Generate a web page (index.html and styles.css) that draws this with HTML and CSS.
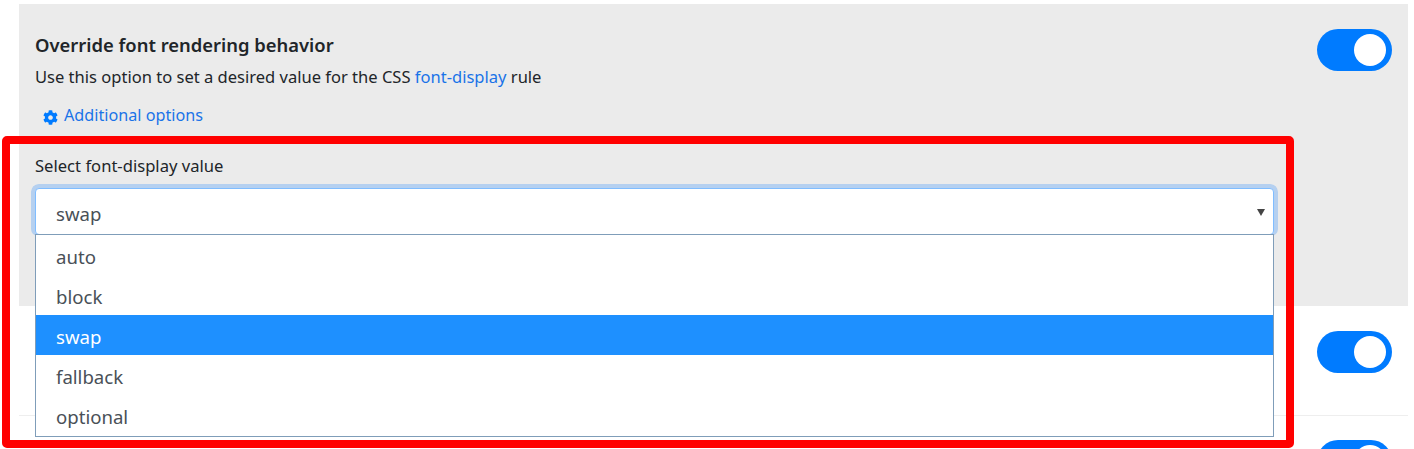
FILE: index.html
```html
<!DOCTYPE html>
<html lang="en">
<head>
<meta charset="utf-8">
<title>Font settings</title>
<link rel="stylesheet" href="styles.css">
</head>
<body>
<main class="page">
  <section class="panel">
    <div class="panel-body">
      <h3 class="title">Override font rendering behavior</h3>
      <p class="desc">Use this option to set a desired value for the CSS <a href="#" class="link">font-display</a> rule</p>
      <a href="#" class="options-link">
        <svg class="gear" viewBox="0 0 512 512" aria-hidden="true"><path d="M487.4 315.7l-42.6-24.6c4.3-23.2 4.3-47 0-70.2l42.6-24.6c4.9-2.8 7.1-8.6 5.5-14-11.1-35.6-30-67.8-54.7-94.6-3.8-4.1-10-5.1-14.8-2.3L380.8 110c-17.9-15.4-38.5-27.3-60.8-35.1V25.8c0-5.6-3.9-10.5-9.4-11.7-36.7-8.2-74.3-7.8-109.2 0-5.5 1.2-9.4 6.1-9.4 11.7V75c-22.2 7.9-42.8 19.8-60.8 35.1L88.7 85.5c-4.9-2.8-11-1.9-14.8 2.3-24.7 26.7-43.6 58.9-54.7 94.6-1.7 5.4.6 11.2 5.5 14L67.3 221c-4.3 23.2-4.3 47 0 70.2l-42.6 24.6c-4.9 2.8-7.1 8.6-5.5 14 11.1 35.6 30 67.8 54.7 94.6 3.8 4.1 10 5.1 14.8 2.3l42.6-24.6c17.9 15.4 38.5 27.3 60.8 35.1v49.2c0 5.6 3.9 10.5 9.4 11.7 36.7 8.2 74.3 7.8 109.2 0 5.5-1.2 9.4-6.1 9.4-11.7v-49.2c22.2-7.9 42.8-19.8 60.8-35.1l42.6 24.6c4.9 2.8 11 1.9 14.8-2.3 24.7-26.7 43.6-58.9 54.7-94.6 1.5-5.5-.7-11.3-5.6-14.1zM256 336c-44.1 0-80-35.9-80-80s35.9-80 80-80 80 35.9 80 80-35.9 80-80 80z"/></svg>
        <span>Additional options</span>
      </a>
      <label class="field-label">Select font-display value</label>
      <div class="select-wrap">
        <div class="select">
          <span>swap</span>
          <svg class="caret" viewBox="0 0 8 7" aria-hidden="true"><path d="M0 0h8L4 7z"/></svg>
        </div>
        <ul class="menu">
          <li class="option">auto</li>
          <li class="option">block</li>
          <li class="option option-active">swap</li>
          <li class="option">fallback</li>
          <li class="option">optional</li>
        </ul>
      </div>
    </div>
    <span class="switch"><span class="knob"></span></span>
  </section>
  <section class="row row-second">
    <span class="switch"><span class="knob"></span></span>
  </section>
  <section class="row row-third">
    <span class="switch"><span class="knob"></span></span>
  </section>
  <div class="highlight"></div>
</main>
</body>
</html>
```
FILE: styles.css
```css
* { box-sizing: border-box; }
html, body { margin: 0; height: 100%; background: #fff; overflow: hidden; }
body { font-family: "Noto Sans", "Open Sans", sans-serif; color: #212529; }
.page { position: relative; height: 449px; padding: 4px 6px 0 19px; overflow: hidden; }
.panel {
  display: flex; justify-content: space-between; align-items: flex-start;
  height: 302px; background: #ebebeb; padding: 25px 16px 0 16px;
}
.panel-body { width: 1239px; padding-top: 1px; }
.title { margin: 2px 0 0; font-size: 18.4px; line-height: 26px; font-weight: 600; }
.desc { margin: 7px 0 0; font-size: 16.55px; line-height: 24px; }
.link { color: #1a73e8; text-decoration: none; }
.options-link { display: flex; align-items: center; gap: 6px; margin: 14px 0 0 8px; color: #1a73e8; text-decoration: none; font-size: 16.2px; line-height: 24px; }
.gear { width: 15px; height: 15px; fill: #007bff; margin-top: 4px; }
.field-label { display: block; margin-top: 27px; font-size: 16.6px; line-height: 24px; }
.select-wrap { position: relative; margin-top: 10px; }
.select {
  display: flex; justify-content: space-between; align-items: center;
  height: 47px; padding: 4px 8px 0 20px; background: #fff;
  border: 1px solid #80bdff; border-radius: 4px;
  box-shadow: 0 0 0 4px #b5d0f0;
  clip-path: inset(-4px -4px -1px -4px round 7px);
  font-size: 18.6px; color: #495057;
}
.caret { width: 8px; height: 7px; fill: #444; margin-top: -3px; }
.menu {
  position: absolute; left: 0; right: 0; top: 46px; margin: 0; padding: 0; list-style: none;
  height: 203px; background: #fff; border: 1px solid #7f9db9;
}
.option { height: 40px; line-height: 44px; padding-left: 20px; font-size: 18.6px; color: #495057; }
.option-active { background: #1e90ff; color: #fff; }
.switch { display: flex; justify-content: flex-end; align-items: center; width: 75px; height: 42px; padding-right: 6px; border-radius: 21px; background: #007bff; flex: none; }
.knob { width: 32px; height: 32px; border-radius: 50%; background: #fff; }
.row { display: flex; justify-content: flex-end; padding-right: 16px; }
.row-second { height: 110px; padding-top: 25px; border-bottom: 1px solid #eee; }
.row-third { padding-top: 24px; }
.highlight { position: absolute; left: 2px; top: 136px; width: 1292px; height: 312px; border: 8px solid #f00; border-radius: 5px; }
```
